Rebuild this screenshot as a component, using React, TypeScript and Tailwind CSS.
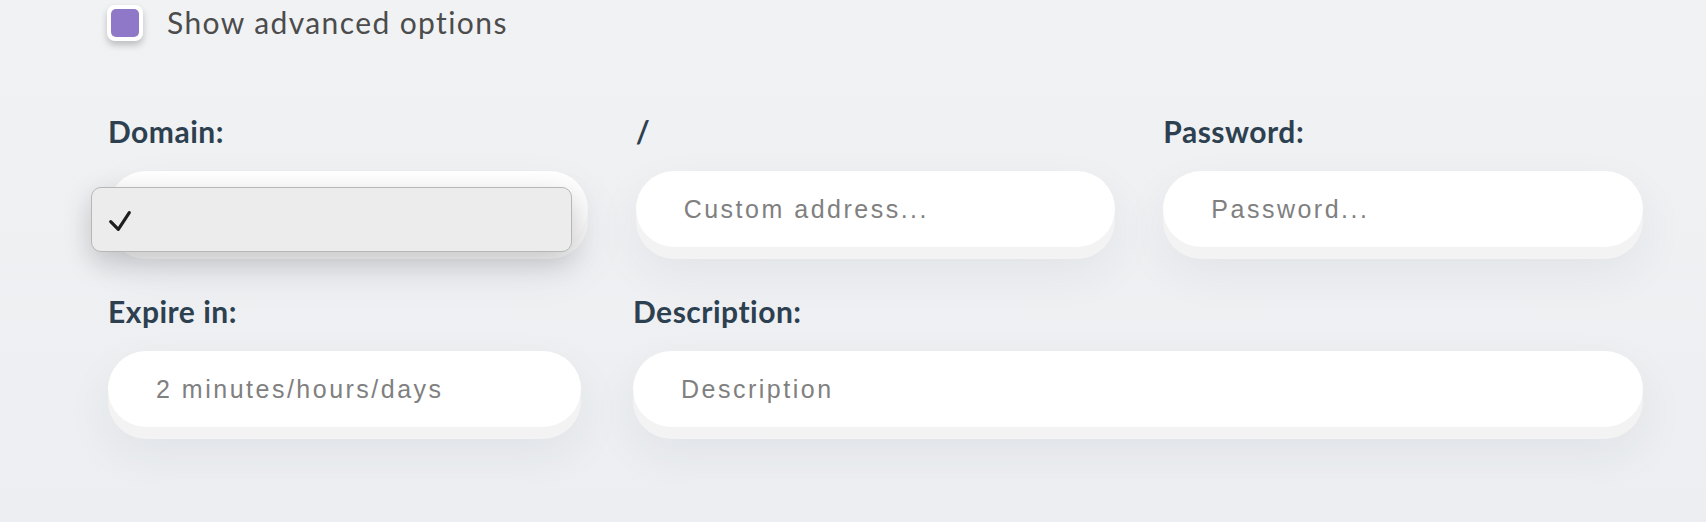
import { useState } from 'react';

// Pill inputs with the flat grey "ledge" under them
const pill =
  'h-[76px] w-full rounded-full bg-white shadow-[0_12px_0_#f3f3f3,0_22px_50px_rgba(40,50,80,0.07)]';
const inputText =
  "pl-[48px] pr-6 font-['Liberation_Sans',Arial,sans-serif] text-[25px] tracking-[2.5px] text-[#333] outline-none placeholder:text-[#808080]";

function FieldLabel({ children }: { children: React.ReactNode }) {
  return (
    <div className="h-[36px] text-[30px] font-bold leading-[36px] tracking-[0.5px] text-[#2d4050]">
      {children}
    </div>
  );
}

function TextField({ label, placeholder, type = 'text' }: { label: string; placeholder: string; type?: string }) {
  const [value, setValue] = useState('');
  return (
    <div>
      <FieldLabel>{label}</FieldLabel>
      <input
        type={type}
        value={value}
        onChange={(e) => setValue(e.target.value)}
        placeholder={placeholder}
        className={`mt-[22px] block ${pill} ${inputText}`}
      />
    </div>
  );
}

export default function App() {
  const [advanced, setAdvanced] = useState(true);

  return (
    <div className="min-h-screen bg-gradient-to-b from-[#f1f2f4] to-[#eceef1] pl-[108px] pr-[63px] pt-[5px] font-['Lato','Noto_Sans',sans-serif]">
      <label className="flex h-[36px] cursor-pointer items-center gap-[24px]">
        <span
          onClick={() => setAdvanced(!advanced)}
          className="-ml-[1px] flex h-[36px] w-[36px] items-center justify-center rounded-[8px] bg-white shadow-[0_4px_7px_rgba(0,0,0,0.22)]"
        >
          <span className={`h-[28px] w-[28px] rounded-[5px] ${advanced ? 'bg-[#8f78c8]' : 'bg-white'}`} />
        </span>
        <span className="-mt-[2px] text-[30px] leading-[36px] tracking-[1.4px] text-[#4c4c4c]">Show advanced options</span>
      </label>

      {advanced && (
        <>
          <div className="mt-[72px] grid grid-cols-3 gap-x-[48px]">
            <div>
              <FieldLabel>Domain:</FieldLabel>
              <div className="relative mt-[22px]">
                <div className={`${pill} bg-gradient-to-b from-white to-[#f4f4f4]`} />
                {/* open native dropdown */}
                <div className="absolute left-[-17px] top-[16px] h-[65px] w-[481px] rounded-[10px] border border-[#b7b7b7] bg-[#ececec] shadow-[0_10px_28px_rgba(0,0,0,0.18)]">
                  <svg className="absolute left-[16px] top-[22px]" width="24" height="22" viewBox="0 0 24 22" fill="none">
                    <path d="M2.7 11.7 L10.3 19.3 L21.3 2.7" stroke="#1e1e1e" strokeWidth="3.2" strokeLinecap="round" strokeLinejoin="round" />
                  </svg>
                </div>
              </div>
            </div>
            <TextField label="/" placeholder="Custom address..." />
            <TextField label="Password:" placeholder="Password..." type="password" />
          </div>

          <div className="mt-[46px] grid grid-cols-[473px_1fr] gap-x-[52px]">
            <TextField label="Expire in:" placeholder="2 minutes/hours/days" />
            <TextField label="Description:" placeholder="Description" />
          </div>
        </>
      )}
    </div>
  );
}
